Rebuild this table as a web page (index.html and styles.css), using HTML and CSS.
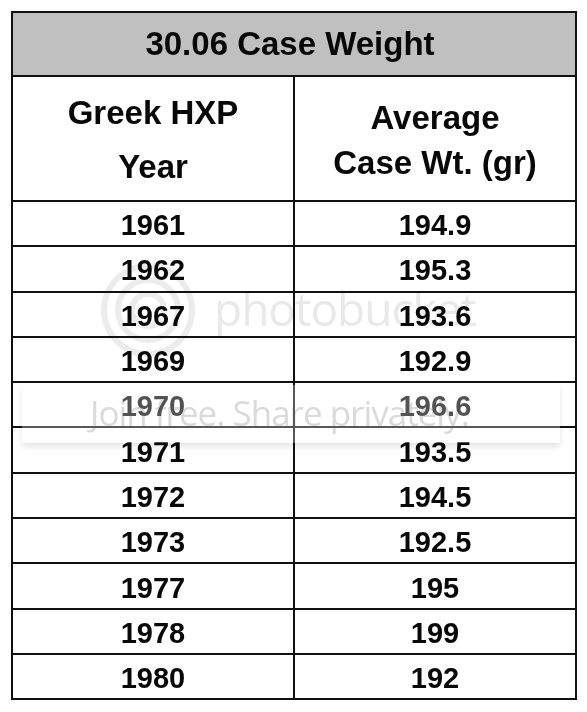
FILE: index.html
```html
<!DOCTYPE html>
<html lang="en">
<head>
    <meta charset="UTF-8">
    <title>30.06 Case Weight</title>
    <link rel="stylesheet" href="styles.css">
</head>
<body>
    <div class="sheet">
        <table class="weights">
            <tr class="title-row">
                <td colspan="2">30.06 Case Weight</td>
            </tr>
            <tr class="head-row">
                <td class="head-left">Greek HXP<br>Year</td>
                <td class="head-right">Average<br>Case Wt. (gr)</td>
            </tr>
            <tr><td>1961</td><td>194.9</td></tr>
            <tr><td>1962</td><td>195.3</td></tr>
            <tr><td>1967</td><td>193.6</td></tr>
            <tr><td>1969</td><td>192.9</td></tr>
            <tr><td>1970</td><td>196.6</td></tr>
            <tr><td>1971</td><td>193.5</td></tr>
            <tr><td>1972</td><td>194.5</td></tr>
            <tr><td>1973</td><td>192.5</td></tr>
            <tr><td>1977</td><td>195</td></tr>
            <tr><td>1978</td><td>199</td></tr>
            <tr><td>1980</td><td>192</td></tr>
        </table>

        <!-- watermark -->
        <div class="wm-logo">
            <svg width="110" height="100" viewBox="0 0 110 100">
                <circle cx="55" cy="50" r="44" fill="none" stroke="#ececec" stroke-width="6"/>
                <circle cx="55" cy="50" r="30" fill="none" stroke="#ececec" stroke-width="6"/>
                <circle cx="55" cy="50" r="16" fill="none" stroke="#ececec" stroke-width="6"/>
            </svg>
        </div>
        <div class="wm-name">photobucket</div>
        <div class="wm-band"></div>
        <div class="wm-join">Join free. Share privately.</div>
    </div>
</body>
</html>
```

FILE: styles.css
```css
body {
    margin: 0;
    background: #fff;
    font-family: "Liberation Sans", Arial, sans-serif;
}

.sheet {
    position: relative;
    width: 587px;
    height: 712px;
    padding: 11px 0 0 11px;
    box-sizing: border-box;
}

.weights {
    border-collapse: collapse;
    width: 566px;
    color: #080808;
    font-weight: bold;
    table-layout: fixed;
}

.weights td {
    border: 2px solid #111;
    text-align: center;
    vertical-align: middle;
    padding: 3px 0 0 0;
    height: 45.3px;
    font-size: 29px;
    line-height: 30px;
    box-sizing: border-box;
}

.weights td:first-child {
    width: 285px;
}

.weights .title-row td {
    background: #c0c0c0;
    height: 64px;
    font-size: 33px;
    padding: 0 8px 0 0;
}

.weights .head-row td {
    height: 125px;
    font-size: 33px;
    padding: 0;
}

.weights .head-row .head-left {
    line-height: 54px;
    padding-top: 2px;
}

.weights .head-row .head-right {
    line-height: 45px;
    padding-top: 2px;
}

/* photobucket watermark over the table */
.wm-logo {
    position: absolute;
    left: 93px;
    top: 260px;
    mix-blend-mode: darken;
}

.wm-name {
    position: absolute;
    left: 214px;
    top: 277px;
    font-family: "Open Sans", sans-serif;
    font-size: 46px;
    letter-spacing: -1px;
    color: #e9e9e9;
    mix-blend-mode: darken;
}

.wm-band {
    position: absolute;
    left: 22px;
    top: 385px;
    width: 538px;
    height: 58px;
    background: rgba(255, 255, 255, 0.3);
    box-shadow: 0 4px 6px rgba(0, 0, 0, 0.1);
}

.wm-join {
    position: absolute;
    left: 90px;
    top: 385px;
    font-family: "Open Sans", sans-serif;
    font-size: 35px;
    line-height: 56px;
    letter-spacing: -1px;
    color: #dadada;
    mix-blend-mode: darken;
}
```
